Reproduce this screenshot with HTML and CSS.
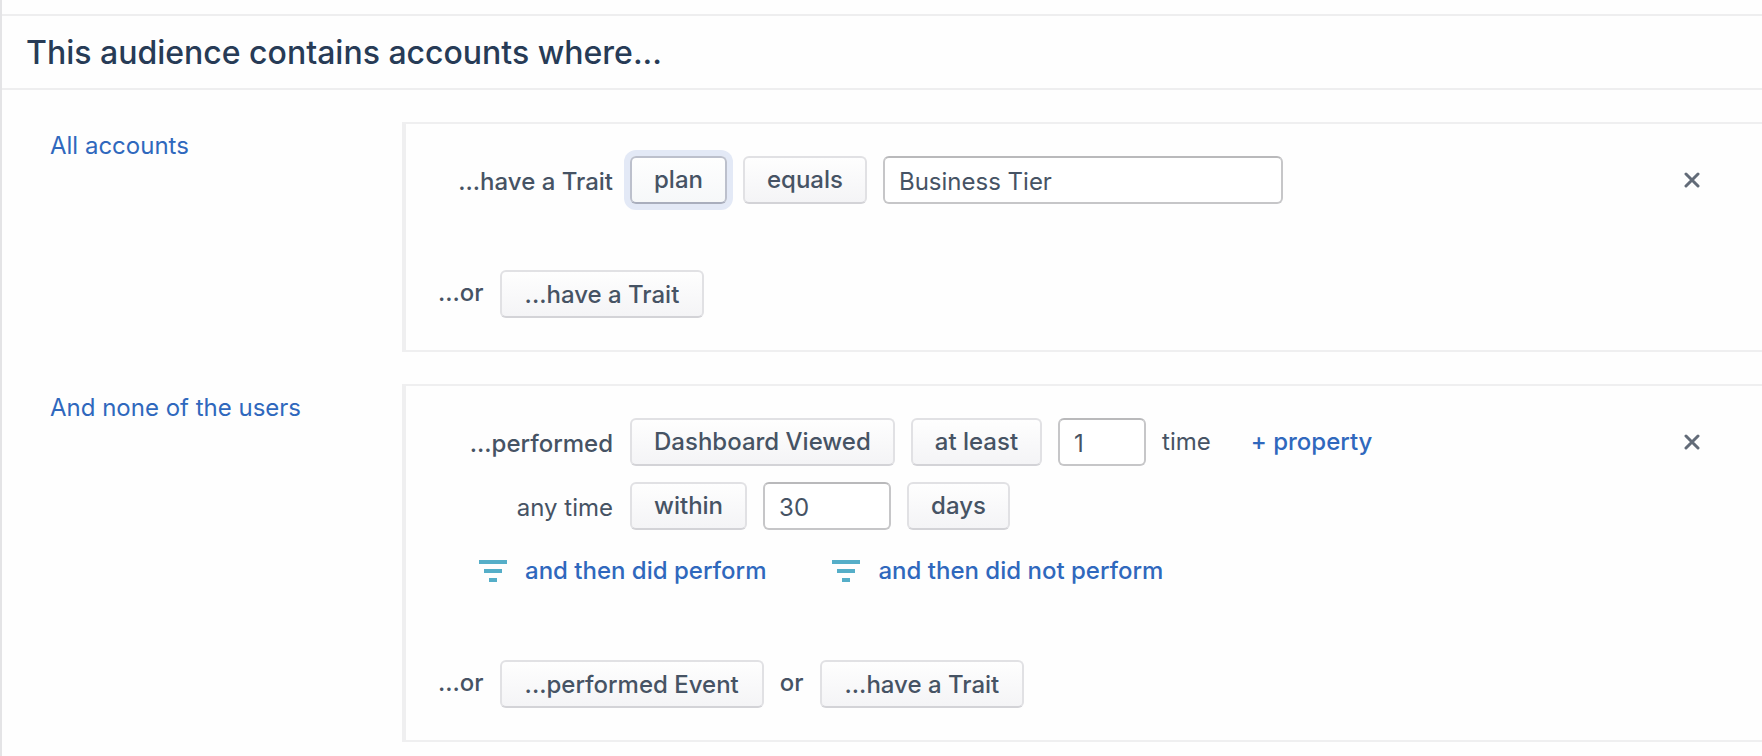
FILE: index.html
```html
<!DOCTYPE html>
<html lang="en">
<head>
<meta charset="utf-8">
<title>Audience builder</title>
<link rel="stylesheet" href="styles.css">
</head>
<body>
<main class="builder">
  <header class="builder-header">
    <h1 class="builder-title">This audience contains accounts where...</h1>
  </header>
  <form class="groups">
    <section class="group">
      <a class="link group-name" href="#accounts">All accounts</a>
      <div class="panel">
        <div class="condition">
          <div class="row">
            <label class="row-label strong" for="trait-value">...have a Trait</label>
            <button class="btn is-active" type="button">plan</button>
            <button class="btn" type="button">equals</button>
            <input class="field field-wide" id="trait-value" type="text" value="Business Tier">
          </div>
          <button class="close" type="button" aria-label="Remove condition">
            <svg class="close-icon" viewBox="0 0 16 16"><path d="M2 2l12 12M14 2L2 14"/></svg>
          </button>
        </div>
        <div class="alternatives">
          <span class="or strong">...or</span>
          <button class="btn" type="button">...have a Trait</button>
        </div>
      </div>
    </section>
    <section class="group">
      <a class="link group-name" href="#users">And none of the users</a>
      <div class="panel">
        <div class="condition">
          <div class="rows">
            <div class="row">
              <label class="row-label strong" for="event-count">...performed</label>
              <button class="btn" type="button">Dashboard Viewed</button>
              <button class="btn" type="button">at least</button>
              <input class="field field-small" id="event-count" type="text" value="1">
              <span class="unit">time</span>
              <a class="link strong add-property" href="#property">+ property</a>
            </div>
            <div class="row">
              <label class="row-label" for="window-days">any time</label>
              <button class="btn" type="button">within</button>
              <input class="field field-medium" id="window-days" type="text" value="30">
              <button class="btn" type="button">days</button>
            </div>
            <div class="sequence">
              <a class="link strong step" href="#did">
                <svg class="funnel" viewBox="0 0 28 22"><path d="M0 0h28v4H0zM5 9h18v4H5zM10 18h8v4h-8z"/></svg>
                and then did perform
              </a>
              <a class="link strong step" href="#did-not">
                <svg class="funnel" viewBox="0 0 28 22"><path d="M0 0h28v4H0zM5 9h18v4H5zM10 18h8v4h-8z"/></svg>
                and then did not perform
              </a>
            </div>
          </div>
          <button class="close" type="button" aria-label="Remove condition">
            <svg class="close-icon" viewBox="0 0 16 16"><path d="M2 2l12 12M14 2L2 14"/></svg>
          </button>
        </div>
        <div class="alternatives">
          <span class="or strong">...or</span>
          <button class="btn" type="button">...performed Event</button>
          <span class="or strong">or</span>
          <button class="btn" type="button">...have a Trait</button>
        </div>
      </div>
    </section>
  </form>
</main>
</body>
</html>
```
FILE: styles.css
```css
* {
  box-sizing: border-box;
}

body {
  margin: 0;
  background: #fefefe;
  color: #465364;
  font-family: Inter, "Liberation Sans", sans-serif;
  font-size: 24px;
  line-height: 32px;
}

.builder {
  min-height: 100vh;
  padding-top: 14px;
  border-left: 2px solid #e4e4e6;
}

.builder-header {
  padding: 18px 24px 16px;
  border-top: 2px solid #eeeeef;
  border-bottom: 2px solid #eeeeef;
}

.builder-title {
  margin: 0;
  color: #273b56;
  font-size: 32px;
  font-weight: 500;
  line-height: 38px;
}

.groups {
  display: flex;
  flex-direction: column;
  gap: 32px;
  padding: 32px 0 14px 48px;
}

.group {
  display: grid;
  grid-template-columns: 352px 1fr;
  align-items: start;
}

.group-name {
  justify-self: start;
  margin-top: 8px;
}

.link {
  color: #2f68bd;
  text-decoration: none;
}

.strong {
  font-weight: 500;
}

.panel {
  display: flex;
  flex-direction: column;
  gap: 66px;
  padding: 32px 62px 32px 32px;
  border: 2px solid #efeff0;
  border-left-width: 4px;
  border-right: 0;
}

.condition {
  display: flex;
  justify-content: space-between;
}

.rows {
  display: flex;
  flex-direction: column;
  gap: 16px;
}

.row,
.alternatives {
  display: flex;
  align-items: center;
  gap: 16px;
}

.row-label {
  width: 176px;
  padding-top: 4px;
  padding-right: 1px;
  text-align: right;
}

.or {
  padding-bottom: 2px;
}

.btn,
.field {
  height: 48px;
  border-radius: 6px;
  font: inherit;
  color: inherit;
}

.btn {
  padding: 0 22px;
  border: 2px solid #e1e1e4;
  border-bottom-color: #d3d3d7;
  background: linear-gradient(#fefefe, #f4f4f6);
  font-weight: 500;
}

.alternatives .btn {
  padding: 2px 23px 0;
}

.btn.is-active {
  border-color: #bcc0cc;
  border-bottom-color: #a9aebd;
  background: linear-gradient(#fefefe, #f6f8f9);
  box-shadow: 0 0 0 6px #e3e9f6;
}

.field {
  padding: 2px 14px 0;
  border: 2px solid #c6c6c8;
  border-top-color: #b9b9bb;
  background: #fff;
}

.field-small {
  width: 88px;
}

.field-medium {
  width: 128px;
}

.field-wide {
  width: 400px;
}

.add-property {
  margin-left: 24px;
}

.sequence {
  display: flex;
  align-items: center;
  gap: 66px;
  height: 48px;
  padding: 2px 0 0 41px;
}

.step {
  display: flex;
  align-items: center;
  gap: 18px;
}

.funnel {
  width: 28px;
  height: 22px;
  fill: #55aec8;
}

.close {
  display: flex;
  align-items: center;
  height: 48px;
  padding: 0;
  border: 0;
  background: none;
}

.close-icon {
  width: 16px;
  height: 16px;
  fill: none;
  stroke: #626b78;
  stroke-width: 3;
  stroke-linecap: round;
}
```
